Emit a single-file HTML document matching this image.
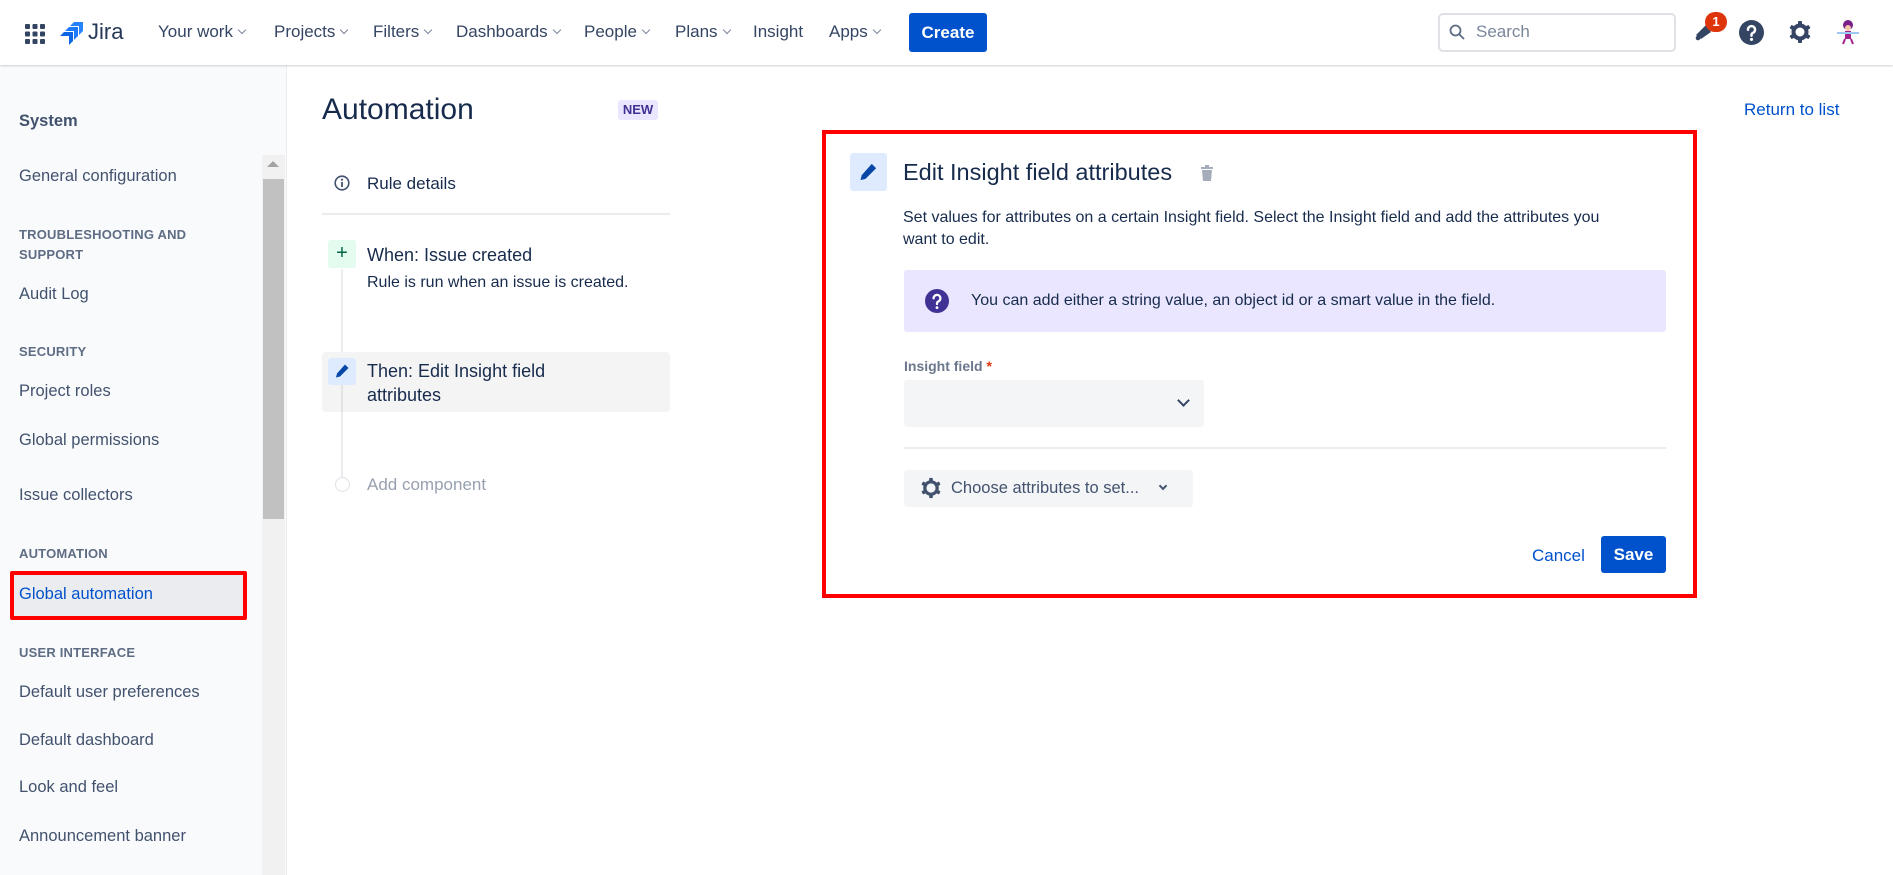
<!DOCTYPE html>
<html><head><meta charset="utf-8"><style>
*{box-sizing:border-box;margin:0;padding:0}
body{width:1893px;height:875px;overflow:hidden;background:#fff;font-family:"Liberation Sans",Arial,sans-serif;color:#172b4d;position:relative}
.a{position:absolute;white-space:nowrap}
.hdr{position:absolute;left:0;top:0;width:1893px;height:65px;background:#fff;box-shadow:0 1px 2px rgba(9,30,66,.2);z-index:2}
.nav{font-size:17px;color:#344563;top:22px}
.chev{display:inline-block;width:6px;height:6px;border-right:1.5px solid #7a869a;border-bottom:1.5px solid #7a869a;transform:rotate(45deg);margin-left:6px;position:relative;top:-4px}
.side{position:absolute;left:0;top:65px;width:287px;height:810px;background:#f9fafc;border-right:1px solid #ebecf0}
.si{font-size:16.5px;color:#42526e;left:19px}
.sh{font-size:13px;font-weight:bold;color:#5e6c84;left:19px;letter-spacing:.2px}
</style></head><body>
<div class="hdr">
  <svg class="a" style="left:25px;top:24px" width="20" height="20" viewBox="0 0 20 20" fill="#344563">
    <rect x="0" y="0" width="5" height="5" rx="1"/><rect x="7.5" y="0" width="5" height="5" rx="1"/><rect x="15" y="0" width="5" height="5" rx="1"/>
    <rect x="0" y="7.5" width="5" height="5" rx="1"/><rect x="7.5" y="7.5" width="5" height="5" rx="1"/><rect x="15" y="7.5" width="5" height="5" rx="1"/>
    <rect x="0" y="15" width="5" height="5" rx="1"/><rect x="7.5" y="15" width="5" height="5" rx="1"/><rect x="15" y="15" width="5" height="5" rx="1"/>
  </svg>
  <svg class="a" style="left:60px;top:21px" width="24" height="24" viewBox="0 0 24 24">
    <path d="M14 1h9v9l-4 4V5h-9z" fill="#2684ff"/><path d="M9 6h9v9l-4 4v-9H5z" fill="#1d7afc"/><path d="M4 11h9v9l-4 4v-9H0z" fill="#0c66e4"/>
  </svg>
  <div class="a" style="left:88px;top:19px;font-size:22px;color:#253858">Jira</div>
  <div class="a nav" style="left:158px">Your work<span class="chev"></span></div>
  <div class="a nav" style="left:274px">Projects<span class="chev"></span></div>
  <div class="a nav" style="left:373px">Filters<span class="chev"></span></div>
  <div class="a nav" style="left:456px">Dashboards<span class="chev"></span></div>
  <div class="a nav" style="left:584px">People<span class="chev"></span></div>
  <div class="a nav" style="left:675px">Plans<span class="chev"></span></div>
  <div class="a nav" style="left:753px">Insight</div>
  <div class="a nav" style="left:829px">Apps<span class="chev"></span></div>
  <div class="a" style="left:909px;top:13px;width:78px;height:39px;background:#0052cc;border-radius:3px;color:#fff;font-size:17px;font-weight:bold;text-align:center;line-height:39px">Create</div>
  <div class="a" style="left:1438px;top:13px;width:238px;height:39px;border:2px solid #dfe1e6;border-radius:5px"></div>
  <svg class="a" style="left:1449px;top:24px" width="16" height="16" viewBox="0 0 16 16" fill="none" stroke="#5e6c84" stroke-width="1.8"><circle cx="6.5" cy="6.5" r="5"/><path d="M10.2 10.2 15 15"/></svg>
  <div class="a" style="left:1476px;top:22px;font-size:17px;color:#7a869a">Search</div>
  <svg class="a" style="left:1692px;top:20px" width="24" height="24" viewBox="0 0 24 24" fill="#344563"><path d="M4 15 L14 5 L19 12 L9 19 Z"/><circle cx="6" cy="18" r="2.3"/></svg>
  <div class="a" style="left:1705px;top:12px;width:22px;height:20px;background:#de350b;border-radius:10px;color:#fff;font-size:13px;font-weight:bold;text-align:center;line-height:20px">1</div>
  <svg class="a" style="left:1739px;top:20px" width="25" height="25" viewBox="0 0 24 24"><circle cx="12" cy="12" r="12" fill="#344563"/><path d="M8.6 9.3a3.4 3.4 0 1 1 4.8 3.1c-1 .5-1.4 1-1.4 2v.6" stroke="#fff" stroke-width="2.4" fill="none" stroke-linecap="round"/><circle cx="12" cy="18.6" r="1.5" fill="#fff"/></svg>
  <svg class="a" style="left:1788px;top:20px" width="24" height="24" viewBox="0 0 24 24"><g fill="#344563"><circle cx="12" cy="12" r="8.5"/><rect x="10" y="1" width="4" height="22" rx="1"/><rect x="10" y="1" width="4" height="22" rx="1" transform="rotate(60 12 12)"/><rect x="10" y="1" width="4" height="22" rx="1" transform="rotate(120 12 12)"/></g><circle cx="12" cy="12" r="4.5" fill="#fff"/></svg>
  <svg class="a" style="left:1835px;top:18px" width="26" height="28" viewBox="0 0 26 28"><circle cx="13" cy="7" r="5" fill="#7a1f8a"/><circle cx="13" cy="10" r="3" fill="#f2c7a8"/><rect x="10" y="13" width="6" height="8" fill="#a0228f"/><path d="M2 15h22" stroke="#9ec9f0" stroke-width="2"/><path d="M10 21l-2 5M16 21l2 5" stroke="#a0228f" stroke-width="2"/></svg>
</div>

<div class="side">
  <div class="a" style="left:19px;top:47px;font-size:16.5px;font-weight:bold;color:#42526e">System</div>
  <div class="a" style="left:262px;top:90px;width:23px;height:720px;background:#f1f1f1"></div>
  <div class="a" style="left:267px;top:96px;width:0;height:0;border-left:6px solid transparent;border-right:6px solid transparent;border-bottom:6px solid #a3a3a3"></div>
  <div class="a" style="left:263px;top:114px;width:21px;height:340px;background:#c1c1c1"></div>
</div>
<div class="a si" style="top:167px">General configuration</div>
<div class="a sh" style="top:227px">TROUBLESHOOTING AND</div>
<div class="a sh" style="top:247px">SUPPORT</div>
<div class="a si" style="top:285px">Audit Log</div>
<div class="a sh" style="top:344px">SECURITY</div>
<div class="a si" style="top:382px">Project roles</div>
<div class="a si" style="top:431px">Global permissions</div>
<div class="a si" style="top:486px">Issue collectors</div>
<div class="a sh" style="top:546px">AUTOMATION</div>
<div class="a" style="left:10px;top:571px;width:237px;height:49px;background:#ebecf0;border:4px solid #ff0000;border-radius:2px"></div>
<div class="a si" style="top:585px;color:#0052cc">Global automation</div>
<div class="a sh" style="top:645px">USER INTERFACE</div>
<div class="a si" style="top:683px">Default user preferences</div>
<div class="a si" style="top:731px">Default dashboard</div>
<div class="a si" style="top:778px">Look and feel</div>
<div class="a si" style="top:827px">Announcement banner</div>

<!-- middle column -->
<div class="a" style="left:322px;top:93px;font-size:30px;font-weight:500;color:#172b4d">Automation</div>
<div class="a" style="left:618px;top:100px;width:40px;height:20px;background:#eae6ff;border-radius:3px;color:#403294;font-size:13px;font-weight:bold;text-align:center;line-height:20px">NEW</div>
<svg class="a" style="left:334px;top:175px" width="16" height="16" viewBox="0 0 16 16"><circle cx="8" cy="8" r="6.8" fill="none" stroke="#42526e" stroke-width="1.6"/><rect x="7.1" y="7" width="1.8" height="5" fill="#42526e"/><circle cx="8" cy="4.7" r="1.1" fill="#42526e"/></svg>
<div class="a" style="left:367px;top:174px;font-size:17px;color:#172b4d">Rule details</div>
<div class="a" style="left:322px;top:213px;width:348px;height:2px;background:#ebecf0"></div>
<div class="a" style="left:341px;top:269px;width:2px;height:208px;background:#ebecf0"></div>
<div class="a" style="left:328px;top:240px;width:28px;height:28px;background:#e3fcef;border-radius:3px;color:#006644;font-size:20px;text-align:center;line-height:27px">+</div>
<div class="a" style="left:367px;top:245px;font-size:18px;color:#172b4d">When: Issue created</div>
<div class="a" style="left:367px;top:274px;font-size:16px;color:#172b4d">Rule is run when an issue is created.</div>
<div class="a" style="left:322px;top:352px;width:348px;height:60px;background:#f4f4f4;border-radius:4px"></div>
<div class="a" style="left:341px;top:385px;width:2px;height:27px;background:#e3e3e3"></div>
<div class="a" style="left:328px;top:358px;width:28px;height:27px;background:#deebff;border-radius:3px"></div>
<svg class="a" style="left:334px;top:363px" width="16" height="16" viewBox="0 0 16 16"><path d="M11 1.5l3.5 3.5-8.5 8.5-4 1 1-4z" fill="#0747a6"/></svg>
<div class="a" style="left:367px;top:359px;font-size:18px;line-height:24px;color:#172b4d">Then: Edit Insight field<br>attributes</div>
<div class="a" style="left:335px;top:477px;width:15px;height:15px;border:1.5px solid #dfe1e6;border-radius:50%;background:#fff"></div>
<div class="a" style="left:367px;top:475px;font-size:17px;color:#97a0af">Add component</div>

<div class="a" style="left:1744px;top:100px;font-size:17px;color:#0052cc">Return to list</div>

<!-- editor panel -->
<div class="a" style="left:822px;top:130px;width:875px;height:468px;border:4px solid #ff0000"></div>
<div class="a" style="left:850px;top:153px;width:37px;height:38px;background:#deebff;border-radius:3px"></div>
<svg class="a" style="left:858px;top:162px" width="20" height="20" viewBox="0 0 16 16"><path d="M11 1.5l3.5 3.5-8.5 8.5-4 1 1-4z" fill="#0747a6"/></svg>
<div class="a" style="left:903px;top:159px;font-size:23.5px;font-weight:500;color:#172b4d">Edit Insight field attributes</div>
<svg class="a" style="left:1199px;top:165px" width="16" height="17" viewBox="0 0 16 17" fill="#a5adba"><rect x="2" y="2" width="12" height="2"/><rect x="6" y="0" width="4" height="2"/><path d="M3 5h10l-1 11H4z"/></svg>
<div class="a" style="left:903px;top:207px;font-size:16px;line-height:22px;color:#172b4d;white-space:normal;width:725px">Set values for attributes on a certain Insight field. Select the Insight field and add the attributes you want to edit.</div>
<div class="a" style="left:904px;top:270px;width:762px;height:62px;background:#eae6ff;border-radius:3px"></div>
<svg class="a" style="left:925px;top:289px" width="24" height="24" viewBox="0 0 24 24"><circle cx="12" cy="12" r="12" fill="#403294"/><path d="M8.6 9.3a3.4 3.4 0 1 1 4.8 3.1c-1 .5-1.4 1-1.4 2v.6" stroke="#fff" stroke-width="2.3" fill="none" stroke-linecap="round"/><circle cx="12" cy="18.6" r="1.4" fill="#fff"/></svg>
<div class="a" style="left:971px;top:292px;font-size:16px;color:#172b4d">You can add either a string value, an object id or a smart value in the field.</div>
<div class="a" style="left:904px;top:358px;font-size:14px;font-weight:bold;color:#6b778c">Insight field<span style="color:#de350b"> *</span></div>
<div class="a" style="left:904px;top:380px;width:300px;height:47px;background:#f4f5f7;border-radius:3px"></div>
<div class="a" style="left:1179px;top:396px;width:9px;height:9px;border-right:2.5px solid #344563;border-bottom:2.5px solid #344563;transform:rotate(45deg)"></div>
<div class="a" style="left:904px;top:447px;width:762px;height:2px;background:#ebecf0"></div>
<div class="a" style="left:904px;top:470px;width:289px;height:37px;background:#f4f5f7;border-radius:3px"></div>
<svg class="a" style="left:920px;top:477px" width="22" height="22" viewBox="0 0 24 24"><g fill="#42526e"><circle cx="12" cy="12" r="8.5"/><rect x="10" y="1" width="4" height="22" rx="1"/><rect x="10" y="1" width="4" height="22" rx="1" transform="rotate(60 12 12)"/><rect x="10" y="1" width="4" height="22" rx="1" transform="rotate(120 12 12)"/></g><circle cx="12" cy="12" r="5" fill="#f4f5f7"/></svg>
<div class="a" style="left:951px;top:479px;font-size:16.5px;font-weight:500;color:#42526e">Choose attributes to set...</div>
<div class="a" style="left:1160px;top:483px;width:6px;height:6px;border-right:2px solid #42526e;border-bottom:2px solid #42526e;transform:rotate(45deg)"></div>
<div class="a" style="left:1532px;top:546px;font-size:17px;color:#0052cc">Cancel</div>
<div class="a" style="left:1601px;top:536px;width:65px;height:37px;background:#0052cc;border-radius:3px;color:#fff;font-size:17px;font-weight:bold;text-align:center;line-height:37px">Save</div>
</body></html>
